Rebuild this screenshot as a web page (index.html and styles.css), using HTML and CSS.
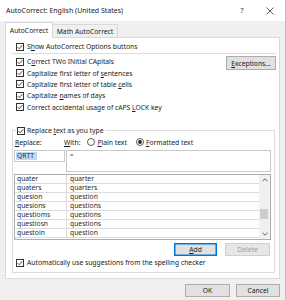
FILE: index.html
```html
<!DOCTYPE html>
<html>
<head>
<meta charset="utf-8">
<link rel="stylesheet" href="styles.css">
</head>
<body>
<div class="dialog">
  <div class="titlebar">
    <span class="title">AutoCorrect: English (United States)</span>
    <span class="help">?</span>
    <span class="close"><svg viewBox="0 0 8 8" width="8" height="8"><path d="M0.5 0.5 L7.5 7.5 M7.5 0.5 L0.5 7.5" stroke="#333" stroke-width="0.8" fill="none"/></svg></span>
  </div>
  <div class="tabs">
    <div class="tab active">AutoCorrect</div>
    <div class="tab">Math AutoCorrect</div>
  </div>
  <div class="panel">
    <div class="row first">
      <svg class="cb" viewBox="0 0 8 8" width="8" height="8"><rect x="0.5" y="0.5" width="7" height="7" fill="#fff" stroke="#333"/><path d="M1.6 4.1 L3.2 5.7 L6.4 2.1" fill="none" stroke="#333" stroke-width="0.9"/></svg>
      <span>S<u>h</u>ow AutoCorrect Options buttons</span>
    </div>
    <div class="sep"></div>
    <div class="rows">
      <div class="row split">
        <div class="rowlabel">
          <svg class="cb" viewBox="0 0 8 8" width="8" height="8"><rect x="0.5" y="0.5" width="7" height="7" fill="#fff" stroke="#333"/><path d="M1.6 4.1 L3.2 5.7 L6.4 2.1" fill="none" stroke="#333" stroke-width="0.9"/></svg>
          <span>C<u>o</u>rrect TWo INitial CApitals</span>
        </div>
        <div class="btn exceptions"><u>E</u>xceptions...</div>
      </div>
      <div class="row">
        <svg class="cb" viewBox="0 0 8 8" width="8" height="8"><rect x="0.5" y="0.5" width="7" height="7" fill="#fff" stroke="#333"/><path d="M1.6 4.1 L3.2 5.7 L6.4 2.1" fill="none" stroke="#333" stroke-width="0.9"/></svg>
        <span>Capitalize first letter of <u>s</u>entences</span>
      </div>
      <div class="row">
        <svg class="cb" viewBox="0 0 8 8" width="8" height="8"><rect x="0.5" y="0.5" width="7" height="7" fill="#fff" stroke="#333"/><path d="M1.6 4.1 L3.2 5.7 L6.4 2.1" fill="none" stroke="#333" stroke-width="0.9"/></svg>
        <span>Capitalize first letter of table <u>c</u>ells</span>
      </div>
      <div class="row">
        <svg class="cb" viewBox="0 0 8 8" width="8" height="8"><rect x="0.5" y="0.5" width="7" height="7" fill="#fff" stroke="#333"/><path d="M1.6 4.1 L3.2 5.7 L6.4 2.1" fill="none" stroke="#333" stroke-width="0.9"/></svg>
        <span>Capitalize <u>n</u>ames of days</span>
      </div>
      <div class="row">
        <svg class="cb" viewBox="0 0 8 8" width="8" height="8"><rect x="0.5" y="0.5" width="7" height="7" fill="#fff" stroke="#333"/><path d="M1.6 4.1 L3.2 5.7 L6.4 2.1" fill="none" stroke="#333" stroke-width="0.9"/></svg>
        <span>Correct accidental usage of cAPS <u>L</u>OCK key</span>
      </div>
    </div>
    <fieldset class="group">
      <legend class="legend">
        <svg class="cb" viewBox="0 0 8 8" width="8" height="8"><rect x="0.5" y="0.5" width="7" height="7" fill="#fff" stroke="#333"/><path d="M1.6 4.1 L3.2 5.7 L6.4 2.1" fill="none" stroke="#333" stroke-width="0.9"/></svg>
        <span>Replace <u>t</u>ext as you type</span>
      </legend>
      <div class="labels">
        <span class="lbl-replace"><u>R</u>eplace:</span>
        <span class="lbl-with"><u>W</u>ith:</span>
        <svg class="radio" viewBox="0 0 8 8" width="8" height="8"><circle cx="4" cy="4" r="3.5" fill="#fff" stroke="#333" stroke-width="0.8"/></svg>
        <span class="opt"><u>P</u>lain text</span>
        <svg class="radio" viewBox="0 0 8 8" width="8" height="8"><circle cx="4" cy="4" r="3.5" fill="#fff" stroke="#333" stroke-width="0.8"/><circle cx="4" cy="4" r="1.9" fill="#222"/></svg>
        <span class="opt"><u>F</u>ormatted text</span>
      </div>
      <div class="inputs">
        <div class="in-replace"><span class="sel">QRTT</span></div>
        <div class="in-with">=</div>
      </div>
      <div class="list">
        <div class="entries">
          <div class="entry"><span class="c1">quater</span><span class="c2">quarter</span></div>
          <div class="entry"><span class="c1">quaters</span><span class="c2">quarters</span></div>
          <div class="entry"><span class="c1">quesion</span><span class="c2">question</span></div>
          <div class="entry"><span class="c1">quesions</span><span class="c2">questions</span></div>
          <div class="entry"><span class="c1">questioms</span><span class="c2">questions</span></div>
          <div class="entry"><span class="c1">questiosn</span><span class="c2">questions</span></div>
          <div class="entry"><span class="c1">questoin</span><span class="c2">question</span></div>
        </div>
        <div class="scrollbar">
          <svg class="arrow" viewBox="0 0 8 6" width="8" height="6"><path d="M1.5 4.2 L4 1.8 L6.5 4.2" fill="none" stroke="#606060" stroke-width="1"/></svg>
          <div class="track"><div class="thumb"></div></div>
          <svg class="arrow" viewBox="0 0 8 6" width="8" height="6"><path d="M1.5 1.8 L4 4.2 L6.5 1.8" fill="none" stroke="#606060" stroke-width="1"/></svg>
        </div>
      </div>
      <div class="actions">
        <div class="btn default"><u>A</u>dd</div>
        <div class="btn disabled">Delete</div>
      </div>
      <div class="row last">
        <svg class="cb" viewBox="0 0 8 8" width="8" height="8"><rect x="0.5" y="0.5" width="7" height="7" fill="#fff" stroke="#333"/><path d="M1.6 4.1 L3.2 5.7 L6.4 2.1" fill="none" stroke="#333" stroke-width="0.9"/></svg>
        <span>Automatically use suggestions from the spelling checker</span>
      </div>
    </fieldset>
  </div>
  <div class="footer">
    <div class="btn ok">OK</div>
    <div class="btn cancel">Cancel</div>
  </div>
</div>
</body>
</html>
```

FILE: styles.css
```css
* { box-sizing: border-box; }
html, body { margin: 0; padding: 0; }
body {
  width: 286px;
  height: 300px;
  overflow: hidden;
  background: #f0f0f0;
  font-family: "Noto Sans", "DejaVu Sans", sans-serif;
  font-size: 6.75px;
  color: #1a1a1a;
}
u { text-decoration-thickness: 0.5px; text-underline-offset: 1px; }
.dialog { width: 286px; height: 300px; display: flex; flex-direction: column; border-right: 1px solid #bcbcbc; }
.titlebar {
  height: 21px;
  background: #fff;
  display: flex;
  align-items: center;
  padding-left: 6px;
  font-size: 7px;
}
.title { flex: 1; }
.help { width: 8px; text-align: center; margin-right: 20px; color: #333; font-size: 7px; }
.close { width: 8px; height: 8px; margin-right: 11px; display: flex; }
.tabs {
  height: 16px;
  display: flex;
  align-items: flex-end;
  padding-left: 5px;
}
.tab {
  height: 13px;
  padding: 0;
  border: 1px solid #d9d9d9;
  border-bottom: none;
  border-left: none;
  display: flex;
  align-items: center;
  justify-content: center;
  background: #f0f0f0;
  width: 65px;
  white-space: nowrap;
}
.tab.active {
  height: 16px;
  width: 48px;
  background: #fff;
  border-left: 1px solid #d9d9d9;
  position: relative;
  z-index: 1;
  margin-bottom: -1px;
  padding-bottom: 1px;
}
.panel {
  margin: 0 5px 0 5px;
  height: 242px;
  background: #fff;
  border: 1px solid #d9d9d9;
  display: flex;
  flex-direction: column;
}
.row {
  display: flex;
  align-items: center;
  height: 11.4px;
  padding-left: 10px;
  white-space: nowrap;
}
.row .cb { margin-right: 3px; flex: none; }
.row.first { margin-top: 3px; height: 11px; }
.sep { height: 1px; background: #dcdcdc; margin: 1px 3px 2px 6px; }
.rows { display: flex; flex-direction: column; }
.row.split { justify-content: space-between; padding-right: 3px; align-items: flex-start; }
.rowlabel { display: flex; align-items: center; height: 11.4px; }
.btn {
  display: flex;
  align-items: center;
  justify-content: center;
  background: #e1e1e1;
  border: 1px solid #adadad;
  white-space: nowrap;
}
.exceptions { width: 50px; height: 14px; margin-bottom: -2.6px; }
.group {
  margin: 12.5px 4px 0 6px;
  padding: 0 3px 3.5px 1px;
  border: 1px solid #dcdcdc;
  min-width: 0;
}
.legend {
  display: flex;
  align-items: center;
  height: 11px;
  padding: 0 2px 0 1px;
  margin-left: 2px;
  white-space: nowrap;
}
.legend .cb { margin-right: 2px; }
.labels {
  display: flex;
  align-items: center;
  height: 11px;
  margin-top: 0.5px;
  white-space: nowrap;
}
.lbl-replace { width: 49px; margin-left: 1px; }
.lbl-with { margin-right: 7px; }
.radio { margin-right: 2px; flex: none; }
.opt { margin-right: 9px; }
.inputs { display: flex; margin-top: 2px; gap: 1px; }
.in-replace {
  width: 51px;
  height: 12px;
  border: 1px solid #c8c8c8;
  padding: 1px 0 0 1px;
  display: flex;
  align-items: center;
}
.sel { background: #bcd8f3; color: #1a2a40; padding: 0 1px 0 1px; line-height: 8px; width: 21px; }
.in-with {
  flex: 1;
  height: 22px;
  border: 1px solid #c8c8c8;
  padding: 0 0 0 3px;
  line-height: 8px;
  font-size: 6px;
  color: #444;
}
.list {
  margin-top: 2px;
  height: 66px;
  border: 1px solid #adadad;
  display: flex;
}
.entries { flex: 1; display: flex; flex-direction: column; }
.entry {
  height: 9px;
  display: flex;
  border-bottom: 1px solid #dcdcdc;
  line-height: 8px;
  color: #2a2a2a;
}
.c1 { width: 52px; border-right: 1px solid #dcdcdc; padding-left: 2px; }
.c2 { flex: 1; padding-left: 3px; }
.scrollbar {
  width: 11px;
  background: #f0f0f0;
  display: flex;
  flex-direction: column;
  align-items: center;
  padding: 2px 0 2px;
}
.arrow { flex: none; }
.track { flex: 1; width: 100%; display: flex; flex-direction: column; justify-content: flex-start; padding-top: 26px; }
.thumb { height: 10px; margin: 0 2px 0 1px; background: #cdcdcd; }
.actions {
  display: flex;
  justify-content: flex-end;
  gap: 8px;
  margin-top: 3px;
  padding-right: 1px;
}
.actions .btn { height: 13px; }
.btn.default { width: 43px; border: 1px solid #0078d7; box-shadow: inset 0 0 0 0.5px #0078d7; }
.btn.disabled { width: 45px; background: #e6e6e6; border-color: #cfcfcf; color: #a0a0a0; }
.row.last { margin-top: 1.5px; height: 11px; padding-left: 2px; }
.footer {
  display: flex;
  justify-content: flex-end;
  gap: 6px;
  padding-right: 5px;
  margin-top: 5px;
}
.footer .btn { height: 13px; }
.ok { width: 45px; }
.cancel { width: 44px; }
```
